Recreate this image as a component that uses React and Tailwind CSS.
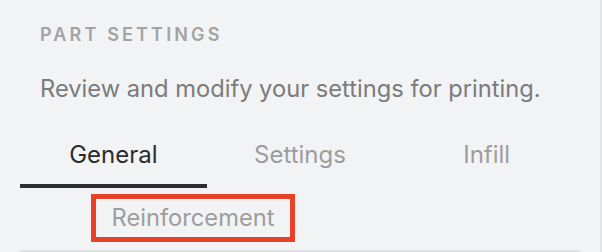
export default function App() {
  return (
    <div className="w-[602px] h-[252px] bg-[#f2f3f5] flex overflow-hidden" style={{ fontFamily: "Inter, 'Noto Sans', sans-serif" }}>
      <div className="flex-1 flex flex-col border-r-2 border-[#e2e3e5] px-[20px]">
        <div className="pl-[20px] pt-[23px] text-[18px] leading-[24px] font-semibold tracking-[0.175em] text-[#a3a3a3]">
          PART SETTINGS
        </div>
        <div className="pl-[20px] mt-[26px] text-[23.7px] leading-[32px] text-[#7b7b7b] whitespace-nowrap">
          Review and modify your settings for printing.
        </div>
        <div className="mt-[25px] border-b-2 border-[#dfe1e4]">
          <div className="grid grid-cols-3">
            <div className="pt-[9px] pb-[13px] text-center text-[24px] leading-[32px] text-[#2c2c2c] border-b-4 border-[#2e2e2e]">
              General
            </div>
            <div className="pt-[9px] pb-[17px] text-center text-[24px] leading-[32px] text-[#9d9d9d]">
              Settings
            </div>
            <div className="pt-[9px] pb-[17px] text-center text-[24px] leading-[32px] text-[#9d9d9d]">
              Infill
            </div>
          </div>
          <div className="pl-[71px] pt-[6px] pb-[8px]">
            <div className="w-[204px] h-[48px] border-[5px] border-[#e84127] flex items-center justify-center text-[23.7px] leading-[32px] text-[#9d9d9d]">
              Reinforcement
            </div>
          </div>
        </div>
      </div>
    </div>
  );
}
